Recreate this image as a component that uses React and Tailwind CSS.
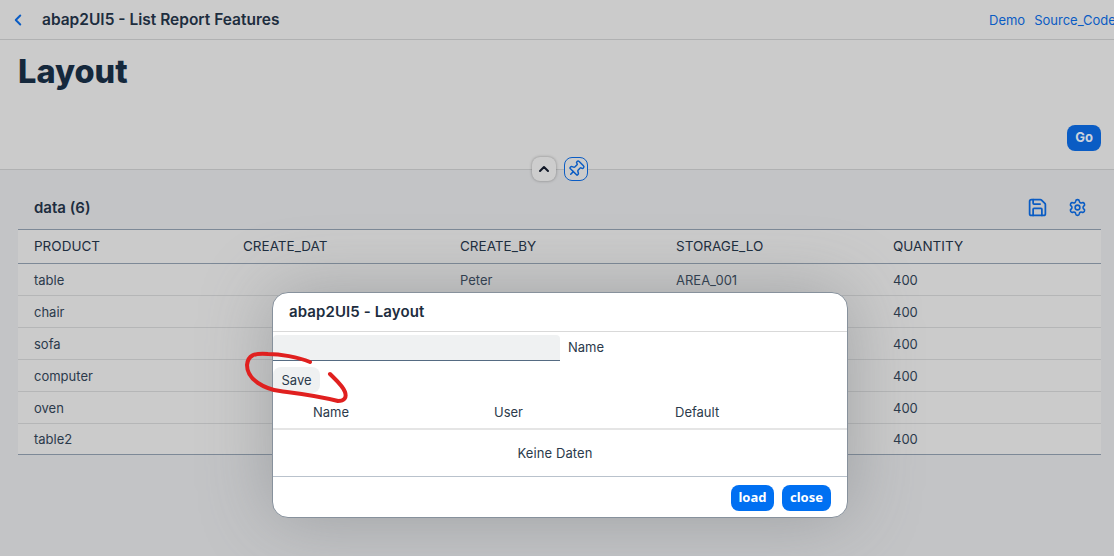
import React from 'react';
import { ChevronLeft, ChevronUp, Pin, Save, Settings } from 'lucide-react';

const columns = ['PRODUCT', 'CREATE_DAT', 'CREATE_BY', 'STORAGE_LO', 'QUANTITY'];

const rows = [
    { product: 'table', by: 'Peter', lo: 'AREA_001', qty: '400' },
    { product: 'chair', by: '', lo: '', qty: '400' },
    { product: 'sofa', by: '', lo: '', qty: '400' },
    { product: 'computer', by: '', lo: '', qty: '400' },
    { product: 'oven', by: '', lo: '', qty: '400' },
    { product: 'table2', by: '', lo: '', qty: '400' },
];

const App = () => {
    return (
        <div className="relative h-[556px] w-[1114px] overflow-hidden bg-[#c3c4c6] font-['Inter',sans-serif] text-[#1d2d3e]">
            <header className="flex h-10 items-center justify-between border-b border-[#b0b1b2] bg-[#cbcbcb] pl-[9px]">
                <div className="flex items-center">
                    <ChevronLeft size={18} strokeWidth={2.6} className="text-[#0a5cc4]" />
                    <span className="ml-[15px] text-[15.5px] font-semibold">abap2UI5 - List Report Features</span>
                </div>
                <div className="flex w-[125px] shrink-0 gap-[9px] overflow-hidden pt-[2px] whitespace-nowrap text-[13px] text-[#0a5cc4]">
                    <span>Demo</span>
                    <span>Source_Code</span>
                </div>
            </header>

            <section className="relative h-[130px] border-b border-[#b0b1b2] bg-[#cbcbcb] pr-[13px] pl-[18px]">
                <h1 className="pt-[12px] text-[32.5px] leading-10 font-extrabold text-[#15283c]">Layout</h1>
                <div className="mt-[33px] flex justify-end">
                    <button className="h-[26px] w-[34px] rounded-lg bg-[#0a5cc4] text-[13px] font-bold text-[#cbd3dd]">Go</button>
                </div>
                <div className="absolute top-[117px] left-[532px] flex gap-2">
                    <button className="flex h-6 w-6 items-center justify-center rounded-lg bg-[#cdcdcd] shadow-[0_0_3px_rgba(0,0,0,0.35)]">
                        <ChevronUp size={16} strokeWidth={3} className="text-[#111827]" />
                    </button>
                    <button className="flex h-6 w-6 items-center justify-center rounded-lg border border-[#0a5cc4] bg-[#cbcbcb]">
                        <Pin size={18} strokeWidth={2} className="rotate-45 text-[#0a5cc4]" />
                    </button>
                </div>
            </section>

            <main className="mx-[18px] w-[1083px]">
                <div className="flex h-[59px] items-center justify-between pt-[16px] pr-[14px] pl-4">
                    <span className="pt-[2px] text-[15px] font-semibold">data (6)</span>
                    <div className="flex items-center gap-[20px]">
                        <Save size={21} strokeWidth={2} className="text-[#0a5cc4]" />
                        <Settings size={19} strokeWidth={2} className="text-[#0a5cc4]" />
                    </div>
                </div>
                <div className="grid h-[35px] grid-cols-[209px_217px_216px_217px_1fr] items-center border-y border-[#7d8997] bg-[#cbcbcb] text-[13.5px]">
                    {columns.map(col => (
                        <div key={col} className="pl-4">{col}</div>
                    ))}
                </div>
                <div className="border-b border-[#7d8997] bg-[#cbcbcb]">
                    {rows.map((row, i) => (
                        <div key={row.product} className={`grid grid-cols-[209px_217px_216px_217px_1fr] items-center text-[13px] text-[#2b3a4b] ${i < rows.length - 1 ? 'h-8 border-b border-[#b5b6b7] pt-[2px]' : 'h-[30px] pt-[2px]'}`}>
                            <div className="pl-4">{row.product}</div>
                            <div className="pl-4"></div>
                            <div className="pl-4">{row.by}</div>
                            <div className="pl-4">{row.lo}</div>
                            <div className="pl-4">{row.qty}</div>
                        </div>
                    ))}
                </div>
            </main>

            <div className="absolute top-[292px] left-[272px] h-[226px] w-[576px] rounded-2xl border border-[#87919c] bg-white shadow-[0_0_70px_rgba(100,105,110,0.4)]">
                <div className="flex h-[39px] items-center border-b border-[#d9d9d9] pl-4 text-[15px] font-semibold tracking-[0.1px]">abap2UI5 - Layout</div>
                <div className="flex h-[29px] items-end">
                    <div className="h-[26px] w-[287px] rounded-t border-b border-[#556b82] bg-[#eff1f2]"></div>
                    <span className="mb-[4px] ml-[8px] text-[13px] text-[#2b3a4b]">Name</span>
                </div>
                <button className="mt-[6px] block h-[26px] w-[47px] rounded-lg bg-[#eff1f2] pt-[1px] text-[13px] text-[#2b3a4b]">Save</button>
                <div className="mt-[10px] grid h-[27px] grid-cols-[181px_181px_1fr] border-b-2 border-[#e5e5e5] pl-[40px] text-[13px] leading-[18px] text-[#2b3a4b]">
                    <span>Name</span>
                    <span>User</span>
                    <span>Default</span>
                </div>
                <div className="flex h-[47px] items-center justify-center border-b border-[#b9c2cc] pt-[1px] pr-[10px] text-[13px] tracking-[0.1px] text-[#2b3a4b]">Keine Daten</div>
                <div className="flex justify-end gap-2 pt-2 pr-4 font-['Noto_Sans',sans-serif] text-[13px] font-bold text-white">
                    <button className="h-[26px] w-[43px] rounded-lg bg-[#0070f2]">load</button>
                    <button className="h-[26px] w-[49px] rounded-lg bg-[#0070f2]">close</button>
                </div>
            </div>

            <svg className="absolute top-[345px] left-[240px]" width="115" height="65" viewBox="0 0 115 65" fill="none">
                <path d="M70 17 C58 12 40 9 28 9 C14 8 8 10 7 20 C7 28 12 34 18 38 C24 42 32 45 40 46 C55 48 75 50 98 56 C104 56 107 53 105 47 C103 41 96 35 90 29" stroke="#e0201f" strokeWidth="4" strokeLinecap="round" />
            </svg>
        </div>
    );
};

export default App;
